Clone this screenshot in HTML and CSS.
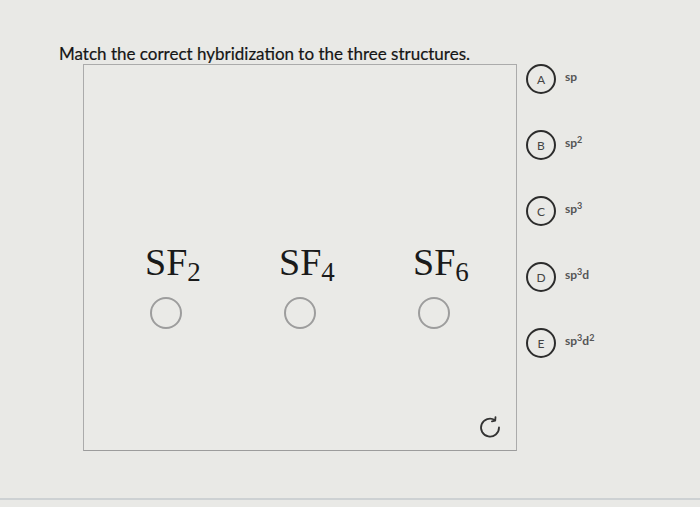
FILE: index.html
```html
<!DOCTYPE html>
<html>
<head>
<meta charset="utf-8">
<link rel="stylesheet" href="styles.css">
</head>
<body>
<div class="page">
  <div class="title">Match the correct hybridization to the three structures.</div>
  <div class="row">
    <div class="board">
      <div class="compounds">
        <div class="compound">
          <div class="formula">SF<span class="sub">2</span></div>
          <div class="radio"></div>
        </div>
        <div class="compound">
          <div class="formula">SF<span class="sub">4</span></div>
          <div class="radio"></div>
        </div>
        <div class="compound">
          <div class="formula">SF<span class="sub">6</span></div>
          <div class="radio"></div>
        </div>
      </div>
      <div class="board-foot">
        <svg class="reset" viewBox="0 0 24 24" width="24" height="24">
          <path d="M21 11.5 A9 9 0 1 1 16.8 4" fill="none" stroke="#333" stroke-width="1.8" stroke-linecap="round"/>
          <path d="M17.5 1.2 L17.2 4.6 L13.9 5.4" fill="none" stroke="#333" stroke-width="1.8" stroke-linecap="round" stroke-linejoin="round"/>
        </svg>
      </div>
    </div>
    <div class="options">
      <div class="option"><span class="badge">A</span><span class="label">sp</span></div>
      <div class="option"><span class="badge">B</span><span class="label">sp<sup>2</sup></span></div>
      <div class="option"><span class="badge">C</span><span class="label">sp<sup>3</sup></span></div>
      <div class="option"><span class="badge">D</span><span class="label">sp<sup>3</sup>d</span></div>
      <div class="option"><span class="badge">E</span><span class="label">sp<sup>3</sup>d<sup>2</sup></span></div>
    </div>
  </div>
  <div class="rule"></div>
</div>
</body>
</html>
```

FILE: styles.css
```css
html, body {
  margin: 0;
  padding: 0;
  background: #e9e9e6;
}
body {
  font-family: Lato, "Liberation Sans", sans-serif;
  color: #222;
  width: 700px;
  height: 507px;
  overflow: hidden;
}
.page {
  padding-top: 43px;
}
.title {
  margin-left: 59px;
  font-size: 17px;
  line-height: 21px;
  height: 21px;
  color: #151515;
  -webkit-text-stroke: 0.2px #151515;
}
.row {
  display: flex;
  margin-left: 83px;
}
.board {
  flex-shrink: 0;
  width: 432px;
  height: 385px;
  border: 1px solid #ababab;
  border-bottom-color: #9c9c9c;
  display: flex;
  flex-direction: column;
  background: #eaeae7;
}
.compounds {
  display: flex;
  padding-top: 178px;
  padding-left: 61px;
}
.compound {
  flex-shrink: 0;
  display: flex;
  flex-direction: column;
  align-items: flex-start;
  width: 134px;
}
.formula {
  font-family: "Liberation Serif", "Times New Roman", serif;
  font-size: 38px;
  line-height: 38px;
  color: #1a1a1a;
}
.sub {
  font-size: 27px;
  line-height: 0;
  vertical-align: -6px;
}
.radio {
  margin-top: 16px;
  margin-left: 5px;
  width: 28px;
  height: 28px;
  border: 2px solid #9d9d9d;
  border-radius: 50%;
}
.board-foot {
  margin-top: auto;
  display: flex;
  justify-content: flex-end;
  padding: 0 14px 10px 0;
}
.reset {
  display: block;
}
.options {
  display: flex;
  flex-direction: column;
  gap: 36px;
  margin-left: 9px;
  padding-top: 0;
}
.option {
  display: flex;
  align-items: center;
  gap: 9px;
}
.badge {
  width: 26px;
  height: 26px;
  border: 2px solid #2c2c2c;
  border-radius: 50%;
  display: flex;
  align-items: center;
  justify-content: center;
  font-size: 12px;
  color: #444;
}
.label {
  font-size: 12px;
  font-weight: bold;
  color: #555;
  margin-top: -6px;
}
.label sup {
  font-size: 9px;
  line-height: 0;
  vertical-align: 4px;
}
.rule {
  margin-top: 47px;
  height: 2px;
  background: #cdd1d3;
}
```
